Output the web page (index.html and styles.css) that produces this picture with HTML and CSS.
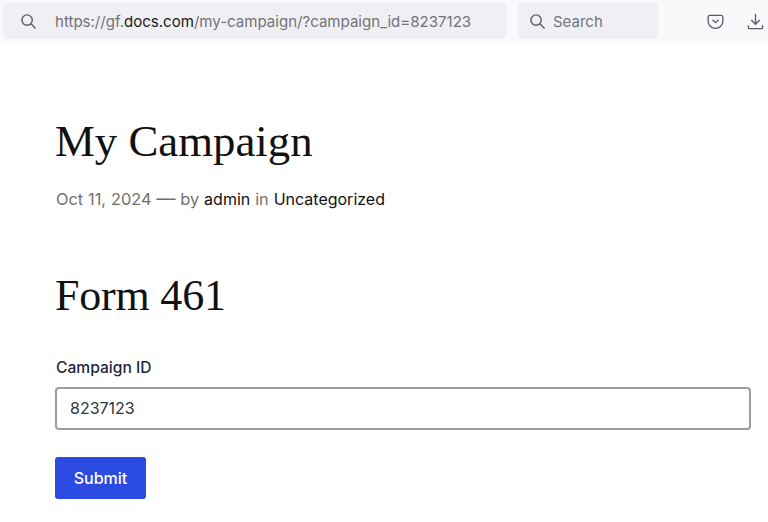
FILE: index.html
```html
<!DOCTYPE html>
<html lang="en">
<head>
  <meta charset="UTF-8" />
  <meta name="viewport" content="width=device-width, initial-scale=1" />
  <title>My Campaign</title>
  <link rel="stylesheet" href="styles.css">
</head>
<body>
  <header class="toolbar">
    <div class="url-bar">
      <svg class="search-icon" viewBox="0 0 18 18"><circle cx="7.5" cy="7.5" r="5.5"/><path d="M11.5 11.5L16.5 16.5"/></svg>
      <span class="url">https://gf.<b>docs.com</b>/my-campaign/?campaign_id=8237123</span>
    </div>
    <div class="search-bar">
      <svg class="search-icon" viewBox="0 0 18 18"><circle cx="7.5" cy="7.5" r="5.5"/><path d="M11.5 11.5L16.5 16.5"/></svg>
      <span>Search</span>
    </div>
    <svg class="tool-icon pocket" viewBox="0 0 18 18"><path d="M3 2.5h12a1.8 1.8 0 0 1 1.8 1.8v4.2a7.8 7.8 0 0 1-15.6 0V4.3A1.8 1.8 0 0 1 3 2.5z"/><path d="M5.8 7.2L9 10.2l3.2-3"/></svg>
    <svg class="tool-icon download" viewBox="0 0 18 18"><path d="M9 1v11M4.5 7.5L9 12l4.500-4.500"/><path d="M1.500 13v2.500a1 1 0 0 0 1 1h13a1 1 0 0 0 1-1V13"/></svg>
  </header>

  <main class="content">
    <h1>My Campaign</h1>
    <p class="meta">Oct 11, 2024 <span class="dash">—</span> by <a href="#">admin</a> in <a href="#">Uncategorized</a></p>
    <h2>Form 461</h2>
    <form class="form">
      <label for="campaign">Campaign ID</label>
      <input id="campaign" type="text" value="8237123">
      <button type="submit">Submit</button>
    </form>
  </main>
</body>
</html>
```

FILE: styles.css
```css
html, body {
  margin: 0;
  height: 100%;
  overflow: hidden;
  background: white;
  font-family: Inter, "Liberation Sans", sans-serif;
}
.toolbar {
  height: 44px;
  box-sizing: border-box;
  padding-top: 3px;
  display: flex;
  align-items: flex-start;
  background: #f9f9fb;
}
.url-bar, .search-bar {
  height: 36px;
  display: flex;
  align-items: center;
  background: #f0f0f4;
  border-radius: 5px;
  font-size: 15px;
  color: #73737a;
}
.url-bar {
  width: 504px;
  margin-left: 3px;
}
.url-bar .search-icon {
  margin-left: 17px;
}
.url {
  margin-left: 18px;
  font-size: 15.05px;
  white-space: nowrap;
}
.url b {
  font-weight: 400;
  color: #1b1b1f;
}
.search-bar {
  width: 140px;
  margin-left: 11px;
}
.search-bar .search-icon {
  margin-left: 11px;
  margin-right: 7px;
}
.search-icon {
  width: 17px;
  height: 17px;
  flex: none;
  fill: none;
  stroke: #5b5b66;
  stroke-width: 1.5;
}
.tool-icon {
  width: 17px;
  height: 17px;
  flex: none;
  margin-top: 10px;
  fill: none;
  stroke: #5b5b66;
  stroke-width: 1.4;
}
.pocket {
  margin-left: 49px;
}
.download {
  margin-left: 23px;
}
.content {
  padding: 0 17px 0 55px;
}
h1, h2 {
  margin: 0;
  font-family: "Liberation Serif", serif;
  font-weight: 400;
  color: #111;
}
h1 {
  padding-top: 69px;
  font-size: 44.8px;
  line-height: 56px;
}
h2 {
  margin-top: 57px;
  font-size: 44px;
  letter-spacing: -0.2px;
  line-height: 56px;
}
.meta {
  margin: 18px 0 0 1px;
  font-size: 16.35px;
  word-spacing: 0.3px;
  line-height: 24px;
  color: #6f6f6f;
}
.dash {
  font-size: 19px;
}
.meta a {
  font-size: 16px;
  color: #111;
  text-decoration: none;
}
.form {
  margin-top: 33px;
}
label {
  display: block;
  margin-left: 1px;
  font-size: 15.6px;
  font-weight: 500;
  line-height: 22px;
  color: #1e293b;
}
input {
  display: block;
  width: 100%;
  height: 43px;
  box-sizing: border-box;
  margin-top: 8px;
  padding: 0 13px 1px;
  border: 2px solid #9a9da4;
  border-radius: 4px;
  font: 400 16px Inter, "Liberation Sans", sans-serif;
  color: #2b3545;
}
button {
  display: block;
  width: 91px;
  height: 42px;
  margin-top: 27px;
  padding-bottom: 2px;
  border: none;
  border-radius: 3px;
  background: #2b4ae2;
  color: white;
  font: 500 16px Inter, "Liberation Sans", sans-serif;
}
```
